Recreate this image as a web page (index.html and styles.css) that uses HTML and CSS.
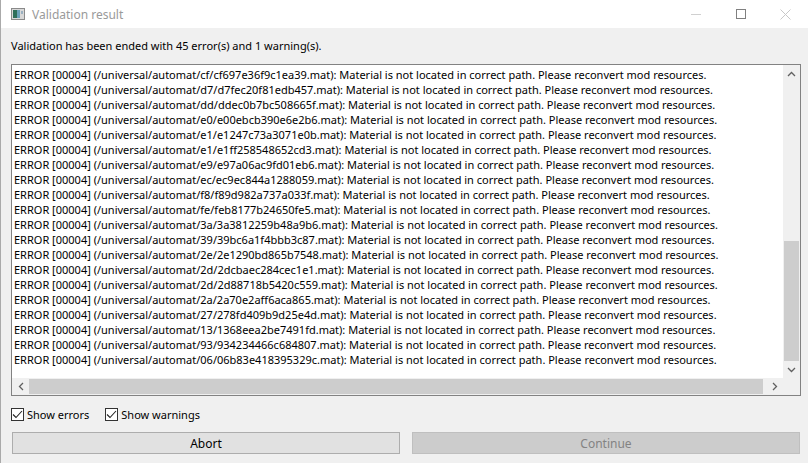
FILE: index.html
```html
<html lang="en">

<head>
    <title>Validation result</title>
    <link rel="stylesheet" href="styles.css">
</head>

<body>
    <div class="window">
        <div class="titlebar">
            <svg class="app-icon" width="14" height="12" viewBox="0 0 14 12">
                <rect x="0.5" y="0.5" width="13" height="11" fill="#d8d8d8" stroke="#8a8a8a"/>
                <rect x="2" y="2" width="4" height="8" fill="#2f6f5a"/>
                <rect x="6" y="2" width="3" height="8" fill="#6aa0b8"/>
                <rect x="10" y="3" width="2" height="3" fill="#9ab0c0"/>
            </svg>
            <span class="title">Validation result</span>
            <div class="win-controls">
                <span class="win-btn"><span class="min-line"></span></span>
                <span class="win-btn"><span class="max-box"></span></span>
                <span class="win-btn">
                    <svg width="11" height="11" viewBox="0 0 11 11"><path d="M0.5 0.5 L10.5 10.5 M10.5 0.5 L0.5 10.5" stroke="#c8c8c8" stroke-width="1"/></svg>
                </span>
            </div>
        </div>

        <div class="content">
            <div class="summary">Validation has been ended with 45 error(s) and 1 warning(s).</div>

            <div class="listbox">
                <div class="list-main">
                    <div class="list-items" id="listItems"></div>
                    <div class="vscroll">
                        <div class="arrow">
                            <svg width="9" height="6" viewBox="0 0 9 6"><path d="M1 5 L4.5 1.5 L8 5" fill="none" stroke="#606060" stroke-width="1.3"/></svg>
                        </div>
                        <div class="vtrack"><div class="vthumb"></div></div>
                        <div class="arrow">
                            <svg width="9" height="6" viewBox="0 0 9 6"><path d="M1 1 L4.5 4.5 L8 1" fill="none" stroke="#606060" stroke-width="1.3"/></svg>
                        </div>
                    </div>
                </div>
                <div class="list-bottom">
                    <div class="hscroll">
                        <div class="harrow">
                            <svg width="6" height="9" viewBox="0 0 6 9"><path d="M5 1 L1.5 4.5 L5 8" fill="none" stroke="#606060" stroke-width="1.3"/></svg>
                        </div>
                        <div class="htrack"><div class="hthumb"></div></div>
                        <div class="harrow">
                            <svg width="6" height="9" viewBox="0 0 6 9"><path d="M1 1 L4.5 4.5 L1 8" fill="none" stroke="#606060" stroke-width="1.3"/></svg>
                        </div>
                    </div>
                    <div class="corner"></div>
                </div>
            </div>

            <div class="filters">
                <label class="check"><span class="box"><svg width="11" height="9" viewBox="0 0 11 9"><path d="M1 4.5 L4 7.5 L10 1" fill="none" stroke="#222" stroke-width="1.1"/></svg></span>Show errors</label>
                <label class="check"><span class="box"><svg width="11" height="9" viewBox="0 0 11 9"><path d="M1 4.5 L4 7.5 L10 1" fill="none" stroke="#222" stroke-width="1.1"/></svg></span>Show warnings</label>
            </div>

            <div class="buttons">
                <button class="btn">Abort</button>
                <button class="btn disabled">Continue</button>
            </div>
        </div>
    </div>

    <script>
        // paths of the reported materials, in the order they are shown
        const paths = [
            "cf/cf697e36f9c1ea39", "d7/d7fec20f81edb457", "dd/ddec0b7bc508665f",
            "e0/e00ebcb390e6e2b6", "e1/e1247c73a3071e0b", "e1/e1ff258548652cd3",
            "e9/e97a06ac9fd01eb6", "ec/ec9ec844a1288059", "f8/f89d982a737a033f",
            "fe/feb8177b24650fe5", "3a/3a3812259b48a9b6", "39/39bc6a1f4bbb3c87",
            "2e/2e1290bd865b7548", "2d/2dcbaec284cec1e1", "2d/2d88718b5420c559",
            "2a/2a70e2aff6aca865", "27/278fd409b9d25e4d", "13/1368eea2be7491fd",
            "93/934234466c684807", "06/06b83e418395329c"
        ];
        const list = document.getElementById("listItems");
        for (let i = 0; i < paths.length; i++) {
            const row = document.createElement("div");
            row.className = "row";
            row.textContent = "ERROR [00004] (/universal/automat/" + paths[i] +
                ".mat): Material is not located in correct path. Please reconvert mod resources.";
            list.appendChild(row);
        }
    </script>
</body>
</html>
```

FILE: styles.css
```css
body {
    margin: 0;
    padding: 0;
    width: 808px;
    height: 463px;
    overflow: hidden;
    background: #f0f0f0;
    font-family: "Segoe UI", "Noto Sans", Arial, sans-serif;
    font-size: 11px;
    color: #000;
}

.window {
    height: 463px;
    display: flex;
    flex-direction: column;
    border-left: 1px solid #aaaaaa;
    box-sizing: border-box;
}

.titlebar {
    height: 28px;
    background: #fff;
    display: flex;
    align-items: center;
    padding-left: 10px;
    flex-shrink: 0;
}

.app-icon {
    margin-top: -1px;
}

.title {
    margin-left: 7px;
    font-size: 12px;
    color: #9a9a9a;
}

.win-controls {
    margin-left: auto;
    display: flex;
    height: 28px;
}

.win-btn {
    width: 45px;
    display: flex;
    align-items: center;
    justify-content: center;
}

.min-line {
    width: 10px;
    height: 1px;
    background: #d0d0d0;
}

.max-box {
    width: 8px;
    height: 8px;
    border: 1px solid #808080;
}

.content {
    flex: 1;
    padding: 0 7px 0 10px;
    display: flex;
    flex-direction: column;
}

.summary {
    height: 36px;
    line-height: 36px;
}

.listbox {
    height: 332px;
    border: 1px solid #828282;
    box-sizing: border-box;
    background: #fff;
    display: flex;
    flex-direction: column;
}

.list-main {
    flex: 1;
    display: flex;
    min-height: 0;
}

.list-items {
    flex: 1;
    padding: 2px 0 0 2px;
    overflow: hidden;
    white-space: nowrap;
}

.row {
    height: 15px;
    line-height: 15px;
}

.vscroll {
    width: 17px;
    display: flex;
    flex-direction: column;
    background: #f0f0f0;
}

.arrow {
    height: 17px;
    display: flex;
    align-items: center;
    justify-content: center;
}

.vtrack {
    flex: 1;
    position: relative;
}

.vthumb {
    position: absolute;
    left: 1px;
    right: 1px;
    bottom: 0;
    height: 120px;
    background: #cdcdcd;
}

.list-bottom {
    height: 17px;
    display: flex;
}

.hscroll {
    flex: 1;
    display: flex;
    background: #f0f0f0;
}

.harrow {
    width: 17px;
    display: flex;
    align-items: center;
    justify-content: center;
}

.htrack {
    flex: 1;
    position: relative;
}

.hthumb {
    position: absolute;
    top: 1px;
    bottom: 1px;
    left: 0;
    right: 3px;
    background: #cdcdcd;
}

.corner {
    width: 17px;
    background: #f0f0f0;
}

.filters {
    height: 36px;
    display: flex;
    align-items: center;
    gap: 16px;
}

.check {
    display: flex;
    align-items: center;
}

.box {
    width: 11px;
    height: 11px;
    border: 1px solid #333;
    background: #fff;
    margin-right: 3px;
    display: flex;
    align-items: center;
    justify-content: center;
}

.buttons {
    display: flex;
    gap: 12px;
    padding: 0 1px;
}

.btn {
    flex: 1;
    height: 22px;
    border: 1px solid #adadad;
    background: #e1e1e1;
    font-family: inherit;
    font-size: 12px;
    color: #000;
    padding: 0;
}

.btn.disabled {
    background: #cccccc;
    border-color: #bfbfbf;
    color: #838383;
}
```
